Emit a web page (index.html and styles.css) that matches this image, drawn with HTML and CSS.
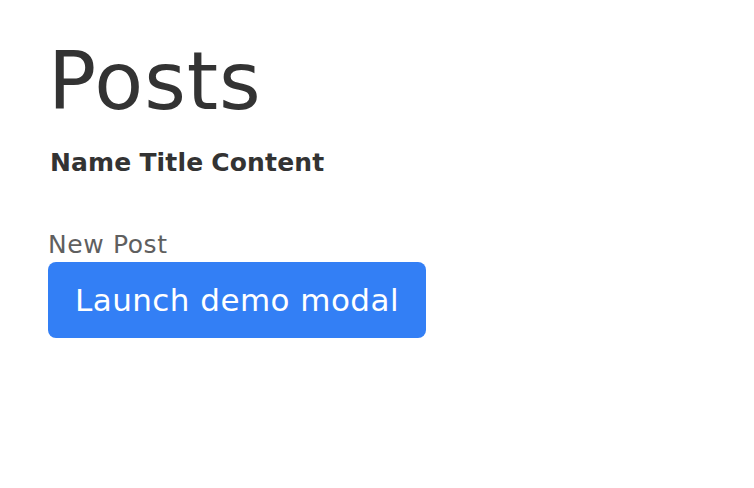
FILE: index.html
```html
<!DOCTYPE html>
<html>
<head>
<meta charset="utf-8">
<link rel="stylesheet" href="styles.css">
</head>
<body>
<div class="page">
  <h1 class="title">Posts</h1>
  <table class="posts">
    <thead>
      <tr><th>Name</th><th>Title</th><th>Content</th></tr>
    </thead>
  </table>
  <div class="new-label">New Post</div>
  <button class="btn-primary" type="button">Launch demo modal</button>
</div>
</body>
</html>
```
FILE: styles.css
```css
html, body {
  margin: 0;
  padding: 0;
  background: #ffffff;
}
body {
  font-family: "DejaVu Sans", Verdana, sans-serif;
  color: #333333;
}
.page {
  padding: 34px 48px 0 48px;
}
.title {
  font-size: 80px;
  line-height: 96px;
  font-weight: 400;
  letter-spacing: 0.9px;
  margin: 0;
  color: #333333;
}
.posts {
  margin-top: 18px;
  border-collapse: collapse;
}
.posts th {
  font-size: 25px;
  line-height: 30px;
  font-weight: 700;
  letter-spacing: 0.15px;
  padding: 0 8px 0 0;
  text-align: left;
  color: #333333;
}
.posts th:first-child {
  padding-left: 2px;
}
.new-label {
  margin-top: 52px;
  font-size: 25px;
  line-height: 30px;
  letter-spacing: 0.6px;
  color: #5f5f5f;
}
.btn-primary {
  display: block;
  margin-top: 2px;
  font-family: "DejaVu Sans", Verdana, sans-serif;
  font-size: 31px;
  line-height: 36px;
  letter-spacing: 0.45px;
  height: 76px;
  padding: 0 27px;
  border: 0;
  border-radius: 8px;
  background: #337ff5;
  color: #ffffff;
}
```
